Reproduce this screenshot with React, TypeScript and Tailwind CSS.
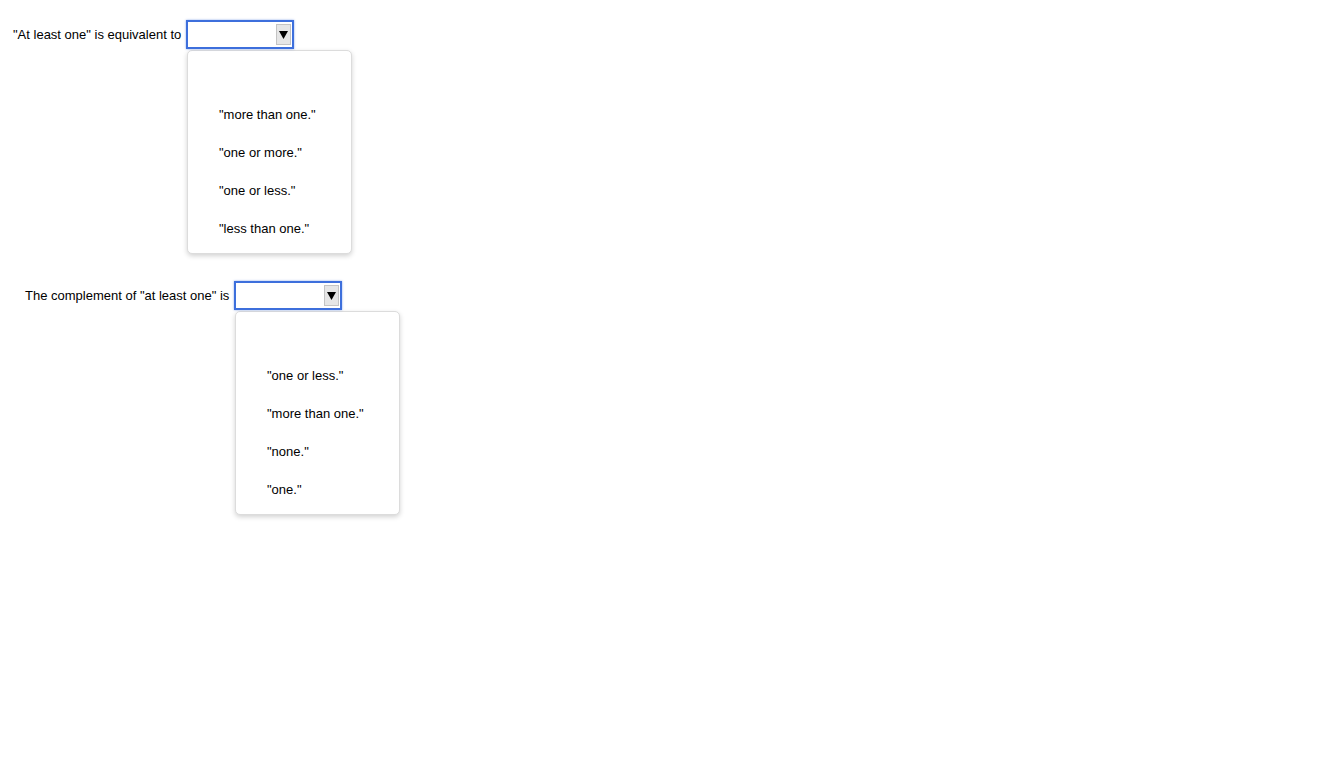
import React from "react";

function SelectBox() {
  return (
    <div className="relative w-[108px] h-[29px] border-2 border-[#3d6fdc] bg-white shadow-[0_0_2px_rgba(61,111,220,0.6)]">
      <div className="absolute right-[1px] top-[2px] w-[15px] h-[21px] bg-[#e6e6e6] border border-[#c4c4c4] flex items-center justify-center">
        <svg width="9" height="9" viewBox="0 0 9 9">
          <polygon points="0,1 9,1 4.5,9" fill="#000" />
        </svg>
      </div>
    </div>
  );
}

function Menu({ items }: { items: string[] }) {
  return (
    <div className="w-[165px] h-[204px] bg-white rounded-[5px] border border-[#dcdcdc] shadow-[0_2px_5px_rgba(0,0,0,0.18)] pt-[56px] pl-[31px]">
      {items.map((t) => (
        <div key={t} className="h-[38px] leading-[16px] text-[13px] text-black">
          {t}
        </div>
      ))}
    </div>
  );
}

export default function App() {
  return (
    <div
      className="min-h-[776px] bg-white text-black pt-[20px]"
      style={{ fontFamily: '"Liberation Sans", Arial, sans-serif' }}
    >
      <div className="flex items-center pl-[13px]">
        <span className="text-[13px] leading-[16px] mr-[5px] pt-[1px]">"At least one" is equivalent to</span>
        <SelectBox />
      </div>
      <div className="ml-[187px] mt-[1px]">
        <Menu items={['"more than one."', '"one or more."', '"one or less."', '"less than one."']} />
      </div>

      <div className="flex items-center pl-[25px] mt-[27px]">
        <span className="text-[13px] leading-[16px] mr-[5px]">The complement of "at least one" is</span>
        <SelectBox />
      </div>
      <div className="ml-[235px] mt-[1px]">
        <Menu items={['"one or less."', '"more than one."', '"none."', '"one."']} />
      </div>
    </div>
  );
}
